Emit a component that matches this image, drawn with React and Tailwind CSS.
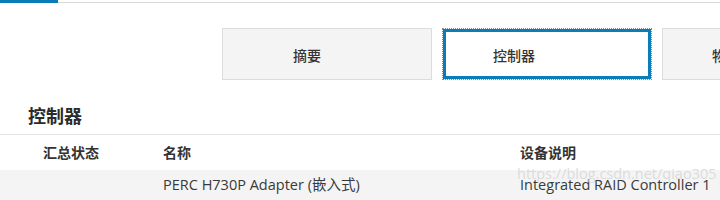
const font = { fontFamily: '"Open Sans", "Noto Sans CJK SC", sans-serif' }

const tabs = [
    { label: '摘要', pad: 'pl-[70px]', active: false },
    { label: '控制器', pad: 'pl-[47px]', active: true },
    { label: '物理磁盘', pad: 'pl-[49px]', active: false },
]

export default function App() {
    return (
        <div className="relative w-[720px] h-[200px] overflow-hidden bg-white text-[#333]" style={font}>
            {/* top rule with active marker */}
            <div className="relative h-[3px]">
                <div className="absolute left-0 right-0 top-[2px] h-px bg-[#d9d9d9]"></div>
                <div className="absolute left-0 top-0 w-[58px] h-[3px] bg-[#0a7cb8]"></div>
            </div>

            {/* tabs */}
            <div className="flex gap-[10px] pl-[222px] mt-[25px]">
                {tabs.map((t) =>
                    t.active ? (
                        <div key={t.label} className="shrink-0 w-[210px] h-[52px] border border-dotted border-[#8a8a8a]">
                            <div className={`h-full border-[3px] border-[#0a7cb8] bg-white flex items-center pt-[2px] ${t.pad}`}>
                                <span className="text-[14px] font-medium">{t.label}</span>
                            </div>
                        </div>
                    ) : (
                        <div key={t.label} className={`shrink-0 w-[210px] h-[52px] border border-[#dcdcdc] bg-[#f4f4f5] flex items-center pt-[2px] overflow-hidden ${t.pad}`}>
                            <span className="text-[14px] font-medium whitespace-nowrap">{t.label}</span>
                        </div>
                    )
                )}
            </div>

            {/* section heading */}
            <div className="pl-[28px] mt-[23px] h-[26px] flex items-center text-[18px] font-bold leading-none text-[#2b2b2b]">控制器</div>
            <div className="mt-[5px] h-px bg-[#e3e3e3]"></div>

            {/* table header */}
            <div className="flex h-[35px] items-center text-[14px] font-bold text-[#333]">
                <div className="w-[163px] pl-[43px]">汇总状态</div>
                <div className="w-[357px]">名称</div>
                <div>设备说明</div>
            </div>

            {/* table row */}
            <div className="flex h-[32px] items-center bg-[#f4f4f5] text-[14.5px] text-[#3a3a3a] pb-[2px]">
                <div className="w-[163px]"></div>
                <div className="w-[357px] whitespace-nowrap">PERC H730P Adapter (嵌入式)</div>
                <div className="whitespace-nowrap">Integrated RAID Controller 1</div>
            </div>

            {/* watermark */}
            <div className="absolute left-[517px] top-[167px] text-[14.5px] leading-none text-[#d4d4d4]/80 whitespace-nowrap pointer-events-none">
                https://blog.csdn.net/qiao305
            </div>
        </div>
    )
}
